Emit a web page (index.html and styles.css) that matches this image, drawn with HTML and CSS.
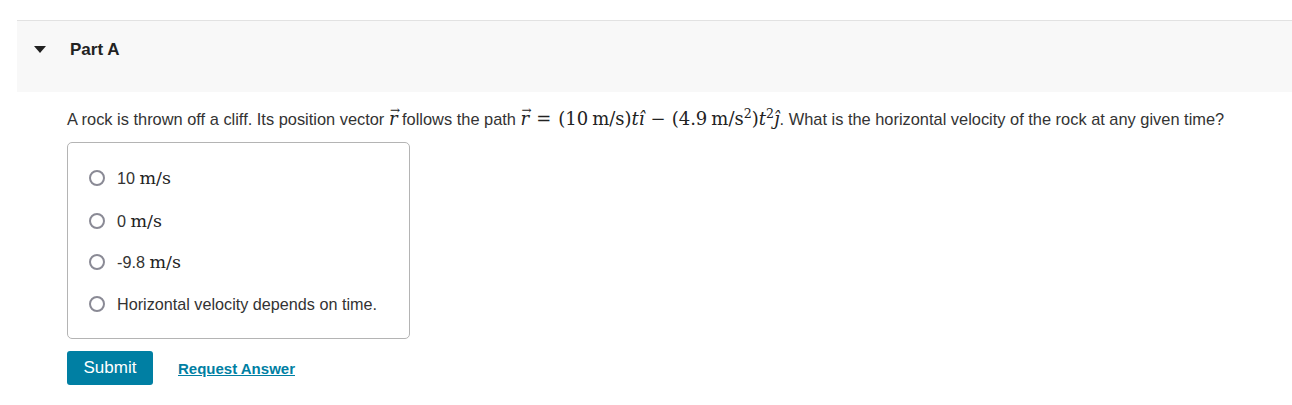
FILE: index.html
```html
<!DOCTYPE html>
<html lang="en">
<head>
  <meta charset="UTF-8">
  <title>Part A</title>
  <link rel="stylesheet" href="styles.css">
</head>
<body>
  <div class="part">
    <div class="part__head">
      <span class="part__toggle"></span>
      <h2 class="part__title">Part A</h2>
    </div>
    <div class="part__body">
      <p class="question">
        A rock is thrown off a cliff. Its position vector <span class="math"><i class="vec">r</i></span> follows the path
        <span class="math"><i class="vec">r</i><span class="rel">=</span>(10<span class="unit">m/s</span>)<i>t</i><i>î</i><span class="bin">&minus;</span>(4.9<span class="unit">m/s<sup>2</sup></span>)<i>t</i><sup>2</sup><i>ĵ</i></span>. What is the horizontal velocity of the rock at any given time?
      </p>
      <div class="choices">
        <label class="choice"><span class="radio"></span><span class="choice__text">10 <span class="math">m/s</span></span></label>
        <label class="choice"><span class="radio"></span><span class="choice__text">0 <span class="math">m/s</span></span></label>
        <label class="choice"><span class="radio"></span><span class="choice__text">-9.8 <span class="math">m/s</span></span></label>
        <label class="choice"><span class="radio"></span><span class="choice__text">Horizontal velocity depends on time.</span></label>
      </div>
      <div class="actions">
        <button class="btn-submit">Submit</button>
        <a class="link-answer" href="#">Request Answer</a>
      </div>
    </div>
  </div>
</body>
</html>
```

FILE: styles.css
```css
body {
  margin: 0;
  font-family: "Liberation Sans", Arial, sans-serif;
  color: #333;
  background: #fff;
}

/* part header */
.part {
  padding-top: 20px;
}
.part__head {
  margin-left: 17px;
  height: 72px;
  display: flex;
  align-items: center;
  border-top: 1px solid #e2e2e2;
  background: #f8f8f8;
  padding-bottom: 14px;
  box-sizing: border-box;
}
.part__toggle {
  width: 0;
  height: 0;
  margin-left: 17px;
  border-left: 6px solid transparent;
  border-right: 6px solid transparent;
  border-top: 7px solid #222;
}
.part__title {
  margin: 0 0 0 24px;
  font-size: 17px;
  font-weight: 700;
  color: #222;
}

.part__body {
  padding-left: 67px;
}
.question {
  margin: 17px 0 0;
  font-size: 16.4px;
  line-height: 20px;
  white-space: nowrap;
}

/* math */
.math {
  font-family: "DejaVu Serif", "Liberation Serif", serif;
  font-size: 18px;
  color: #222;
}
.math i {
  font-style: italic;
}
.math sup {
  font-size: 0.7em;
  line-height: 0;
}
.unit {
  margin-left: 4px;
}
.rel {
  padding: 0 7px;
}
.bin {
  padding: 0 6px;
}
.vec {
  position: relative;
  display: inline-block;
}
.vec::after {
  content: "\2192";
  position: absolute;
  left: 1px;
  top: -9px;
  font-size: 12px;
  font-style: normal;
}

/* choices */
.choices {
  margin-top: 13px;
  width: 343px;
  box-sizing: border-box;
  border: 1px solid #b4b4b4;
  border-radius: 5px;
  padding: 23px 0 22px 21px;
  display: flex;
  flex-direction: column;
  gap: 16px;
}
.choice {
  height: 24px;
  display: flex;
  align-items: center;
  font-size: 16.2px;
  cursor: pointer;
}
.choice .math {
  font-size: 17.5px;
}
.choice:nth-child(2) {
  margin-top: 3px;
}
.choice:nth-child(3) {
  margin-top: 1px;
}
.choice:nth-child(4) {
  margin-top: 2px;
}
.radio {
  width: 12px;
  height: 12px;
  border: 2px solid #8a8a95;
  border-radius: 50%;
  margin-right: 12px;
}

/* actions */
.actions {
  margin-top: 12px;
  display: flex;
  align-items: center;
  gap: 25px;
}
.btn-submit {
  width: 86px;
  height: 34px;
  border: 0;
  border-radius: 3px;
  background: #007fa3;
  color: #fff;
  font-family: "Liberation Sans", Arial, sans-serif;
  font-size: 17px;
}
.link-answer {
  color: #007fa3;
  font-size: 15px;
  font-weight: 700;
}
```
